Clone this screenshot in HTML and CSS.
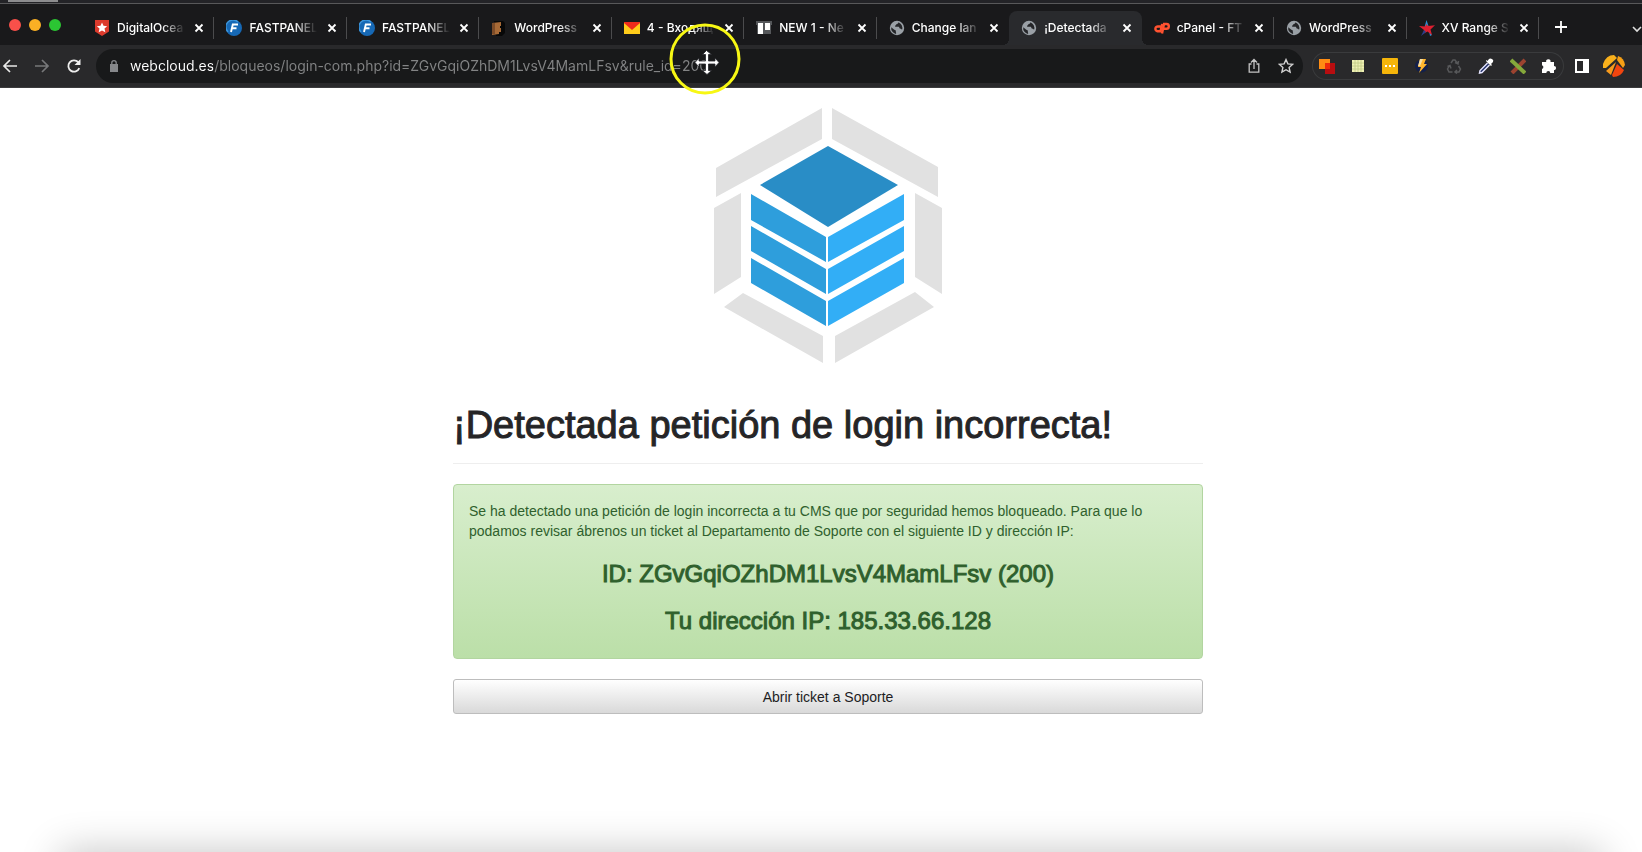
FILE: index.html
```
<!DOCTYPE html>
<html lang="es">
<head>
<meta charset="utf-8">
<title>¡Detectada petición de login incorrecta!</title>
<link rel="stylesheet" href="styles.css">
</head>
<body>
<svg class="defs" aria-hidden="true">
  <symbol id="close" viewBox="0 0 10 10"><path d="M1.500 1.500l7 7M8.500 1.500l-7 7" stroke="currentColor" stroke-width="1.800"/></symbol>
  <symbol id="globe" viewBox="0 0 16 16"><circle cx="8" cy="8" r="7.200" fill="#9aa0a6"/><path d="M2.200 7.200L5 9.500c.4.600 1.300.5 1.800 1 .3.700-.2 1.200.2 1.900.3.400.2.900 0 1.500A6 6 0 0 1 2.200 7.200zM9.200 2.300c.5.700-.3 1.500-1.300 1.700-.9.200-.6 1.100-1.400 1.400-.8.200-.6 1.100.1 1.300h3c.8.200.5 1.500 1.400 1.800.9.200 1.700.5 2 1.500A6 6 0 0 0 9.200 2.300z" fill="#242528"/></symbol>
  <symbol id="fast" viewBox="0 0 16 16"><circle cx="8" cy="8" r="8" fill="#1668b5"/><path d="M2 12A7 7 0 0 1 12 2" fill="none" stroke="#3a94dc" stroke-width="1.500"/><path d="M5 12L6.800 4.500H12M6 8.300h4.500" fill="none" stroke="#fff" stroke-width="1.900"/></symbol>
</svg>

<header class="browser">
  <div class="backdrop"><span></span></div>
  <div class="strip">
    <div class="lights"><i class="red"></i><i class="amber"></i><i class="green"></i></div>
    <nav class="tabs" aria-label="Pestañas">
      <div class="tab"><svg class="fav" viewBox="0 0 16 16"><path d="M1 0h14v11.500L8 16l-7-4.500z" fill="#dc3b2d"/><path d="M8 2.500l1.500 3.300 3.700.4-2.700 2.400.8 3.600L8 10.400l-3.300 1.800.8-3.600-2.700-2.400 3.700-.4z" fill="#fff"/></svg><span class="title">DigitalOcea</span><button class="x" aria-label="Cerrar"><svg><use href="#close"/></svg></button></div>
      <div class="tab"><svg class="fav"><use href="#fast"/></svg><span class="title">FASTPANEL</span><button class="x" aria-label="Cerrar"><svg><use href="#close"/></svg></button></div>
      <div class="tab"><svg class="fav"><use href="#fast"/></svg><span class="title">FASTPANEL</span><button class="x" aria-label="Cerrar"><svg><use href="#close"/></svg></button></div>
      <div class="tab"><svg class="fav" viewBox="0 0 16 16"><path d="M3 1h9l2 2v10l-3 3H5z" fill="#080808"/><path d="M1 3l9-1v4H9v2h1v4H8v2l-7 1z" fill="#a86a36"/><path d="M1 3h3v11H1z" fill="#7d4c28"/></svg><span class="title">WordPress</span><button class="x" aria-label="Cerrar"><svg><use href="#close"/></svg></button></div>
      <div class="tab"><svg class="fav" viewBox="0 0 16 16"><path d="M0 2h16v12H0z" fill="#ffcc1a"/><path d="M0 2h16v1L8 10 0 3z" fill="#ee2a1c"/></svg><span class="title">4 - Входящ</span><button class="x" aria-label="Cerrar"><svg><use href="#close"/></svg></button></div>
      <div class="tab"><svg class="fav" viewBox="0 0 16 16"><path d="M0 1h16v4h-1v9H1V5H0z" fill="#55575a"/><path d="M2 3h5v11H2zM9 3h5v7H9z" fill="#fff"/></svg><span class="title">NEW 1 - Ne</span><button class="x" aria-label="Cerrar"><svg><use href="#close"/></svg></button></div>
      <div class="tab plain"><svg class="fav"><use href="#globe"/></svg><span class="title">Change lan</span><button class="x" aria-label="Cerrar"><svg><use href="#close"/></svg></button></div>
      <div class="tab plain active"><svg class="fav"><use href="#globe"/></svg><span class="title">¡Detectada</span><button class="x" aria-label="Cerrar"><svg><use href="#close"/></svg></button></div>
      <div class="tab"><svg class="fav" viewBox="0 0 16 16"><path d="M6.500 6.500H4a2.300 2.300 0 0 0-.5 4.700h3L8.200 4" fill="none" stroke="#ff5230" stroke-width="2.400"/><path d="M8 13.500L10 4h2.600a2.400 2.400 0 0 1-.4 4.800H10" fill="none" stroke="#ff5230" stroke-width="2.400"/></svg><span class="title">cPanel - FT</span><button class="x" aria-label="Cerrar"><svg><use href="#close"/></svg></button></div>
      <div class="tab"><svg class="fav"><use href="#globe"/></svg><span class="title">WordPress</span><button class="x" aria-label="Cerrar"><svg><use href="#close"/></svg></button></div>
      <div class="tab"><svg class="fav" viewBox="0 0 16 16"><path d="M7.500 0L9.500 6l-4 1zM11 16l-1-5 3 4z" fill="#2b8fd0"/><path d="M0 6l6 .5L7.500 4l1.500 2 7-.8-4.500 4.300L13 15l-4.500-3.500L4 14l1-4z" fill="#dd1f30"/><path d="M2 16l3-6 2 2z" fill="#27408b"/></svg><span class="title">XV Range S</span><button class="x" aria-label="Cerrar"><svg><use href="#close"/></svg></button></div>
    </nav>
    <div class="strip-end">
      <button aria-label="Nueva pestaña"><svg width="12" height="12" viewBox="0 0 12 12"><path d="M6 0v12M0 6h12" stroke="#fff" stroke-width="1.800"/></svg></button>
      <button aria-label="Buscar pestañas"><svg width="10" height="8" viewBox="0 0 10 8"><path d="M1 2l4 4 4-4" fill="none" stroke="#ddd" stroke-width="1.600"/></svg></button>
    </div>
  </div>

  <div class="toolbar">
    <div class="nav">
      <button aria-label="Atrás"><svg viewBox="0 0 16 16"><path d="M15 8H2.500M8 2L2 8l6 6" fill="none" stroke="#e8e8e8" stroke-width="1.700"/></svg></button>
      <button aria-label="Adelante"><svg viewBox="0 0 16 16"><path d="M1 8h12.500M8 2l6 6-6 6" fill="none" stroke="#77787a" stroke-width="1.700"/></svg></button>
      <button aria-label="Recargar"><svg viewBox="0 0 16 16"><path d="M13.300 10.200A5.700 5.700 0 1 1 12.300 4.200" fill="none" stroke="#eee" stroke-width="1.800"/><path d="M14.500 1v6h-6z" fill="#eee"/></svg></button>
    </div>
    <div class="omnibox">
      <svg class="lock" viewBox="0 0 10 14"><path d="M1 5h8v8H1z" fill="#86888b"/><path d="M2.800 6V3.800a2.200 2.200 0 0 1 4.400 0V6" fill="none" stroke="#86888b" stroke-width="1.300"/></svg>
      <input class="url" type="text" aria-label="Dirección" value="webcloud.es/bloqueos/login-com.php?id=ZGvGqiOZhDM1LvsV4MamLFsv&amp;rule_id=200">
      <button aria-label="Compartir"><svg viewBox="0 0 16 16"><path d="M5.500 6H3.200v8.200h9.600V6h-2.300M8 11V2M5 4.500l3-3 3 3" fill="none" stroke="#c4c4c4" stroke-width="1.300"/></svg></button>
      <button aria-label="Favorito"><svg viewBox="0 0 16 16"><path d="M8 1.600l1.900 4.300 4.700.5-3.500 3.100 1 4.600L8 11.700l-4.100 2.400 1-4.600L1.400 6.400l4.700-.5z" fill="none" stroke="#d2d2d2" stroke-width="1.400"/></svg></button>
    </div>
    <div class="extensions">
      <button aria-label="Capas"><svg viewBox="0 0 16 16"><path d="M6 5h10v11H6z" fill="#b80d10"/><path d="M0 1h11v10H0z" fill="#ff8c13"/><path d="M6 5h5v6H6z" fill="#ef2a0a"/></svg></button>
      <button aria-label="Hoja"><svg viewBox="0 0 16 16"><path d="M2 2h12v12H2z" fill="#eff0b5"/><path d="M2 5h12M2 8h12M2 11h12M5 2v12M8 2v12M11 2v12" stroke="#bfc987" stroke-width=".8"/></svg></button>
      <button aria-label="Notas"><svg viewBox="0 0 16 16"><rect width="16" height="16" rx="1" fill="#f5b50a"/><path d="M3 8h2M7 8h2M11 8h2" stroke="#fff" stroke-width="1.800"/></svg></button>
      <button aria-label="Rayo"><svg viewBox="0 0 16 16"><circle cx="7.500" cy="8" r="6.500" fill="#131f4a"/><path d="M6 1h6l-2 5h3L5 15l2-6H4z" fill="#ffb62e"/><path d="M6 1h3L6 8H4z" fill="#f7dfa6"/></svg></button>
      <button aria-label="Reciclar"><svg viewBox="0 0 16 16"><path d="M5 5l2-3h2l2.500 3.500M12.500 8l2 3-1.500 3H9.500M6.500 14H3l-1.500-3 2-3.500M9 4.500l3 1.500.5-3M11 12l-2 2 2 1.500M1.500 8.500l2.500-1 1 3" fill="none" stroke="#57585a" stroke-width="1.500"/></svg></button>
      <button aria-label="Cuentagotas"><svg viewBox="0 0 16 16"><path d="M9.500 5L2 12.500 1.500 15 4 14.500 11.500 7" fill="#26336d" stroke="#e6e6ff" stroke-width="1.400"/><path d="M8 3l5 5 1-1-1-1 2-2q1-2-1-3t-3 0l-1.500 2-1-1z" fill="#fff"/></svg></button>
      <button aria-label="Herramientas"><svg viewBox="0 0 16 16"><path d="M15 2L2 15" stroke="#9c4330" stroke-width="4"/><path d="M1 2l14 13" stroke="#85a83b" stroke-width="4"/></svg></button>
      <button aria-label="Extensiones"><svg viewBox="0 0 16 16"><path d="M1 4h4.200a2.200 2.200 0 1 1 4.300 0H13v4a2.100 2.100 0 1 1 0 4.200V15H9.300a2 2 0 0 0-4 0H1v-4a2 2 0 0 0 0-3.800z" fill="#fff"/></svg></button>
    </div>
    <div class="profile">
      <button aria-label="Panel lateral"><svg viewBox="0 0 16 16"><path d="M2 2h12v12H2z" fill="none" stroke="#fff" stroke-width="2"/><path d="M9 2h5v12H9z" fill="#fff"/></svg></button>
      <button class="avatar" aria-label="Perfil"><svg viewBox="0 0 24 24"><path d="M1 10Q4 1 12 1l3 3L4 14H1z" fill="#f8b01c"/><path d="M16 2q6 2 7 9l-2 3-6-8z" fill="#f7a015"/><path d="M4 17L14 8l-5 13z" fill="#f79a1c"/><path d="M15 10l7 6q-3 7-11 7l-1-2z" fill="#f2450f"/></svg></button>
    </div>
  </div>

  <svg class="pointer" viewBox="0 0 72 72" aria-hidden="true">
    <circle cx="36" cy="36" r="34" fill="none" stroke="#f7f714" stroke-width="3"/>
    <g fill="#fff" stroke="#23242a" stroke-width=".8"><path d="M37.500 27.500l-4 4h3v6.500h-6.500v-3l-4 4.500 4 4.500v-3h6.500v6.500h-3l4.500 4 4.500-4h-3V41H46v3l4-4.500-4-4.500v3h-6.500v-6.500h3z"/></g>
  </svg>
</header>

<main class="page">
  <div class="content">
    <svg class="logo" viewBox="0 0 228 256" role="img" aria-label="webcloud">
      <g fill="#e1e1e1">
        <path d="M108 0v31L2 89V60zM118 0v31l106 58V59zM0 100l27-15v84L0 186zM228 100l-27-15v84l27 17zM29 185l-19 14 99 56v-27zM201 184l19 15-99 56v-27z"/>
      </g>
      <path d="M114 38l70 39-70 42-68-42z" fill="#298dc6"/>
      <path d="M37 86l75 43v25l-75-42zM37 118l75 43v25l-75-43zM37 150l75 43v25l-75-43z" fill="#2e9edc"/>
      <path d="M190 86l-76 43v25l76-42zM190 118l-76 43v25l76-43zM190 150l-76 43v25l76-43z" fill="#32aef6"/>
    </svg>
    <h1>¡Detectada petición de login incorrecta!</h1>
    <section class="alert">
      <p>Se ha detectado una petición de login incorrecta a tu CMS que por seguridad hemos bloqueado. Para que lo podamos revisar ábrenos un ticket al Departamento de Soporte con el siguiente ID y dirección IP:</p>
      <h3>ID: ZGvGqiOZhDM1LvsV4MamLFsv (200)</h3>
      <h3>Tu dirección IP: 185.33.66.128</h3>
    </section>
    <button class="ticket">Abrir ticket a Soporte</button>
  </div>
  <div class="shade"></div>
</main>
</body>
</html>
```
FILE: styles.css
```
* { box-sizing: border-box; }
body {
  margin: 0;
  min-height: 100vh;
  display: flex;
  flex-direction: column;
  background: #fff;
  font-family: "Liberation Sans", Arial, sans-serif;
  font-size: 14px;
  line-height: 20px;
}
.defs { position: absolute; width: 0; height: 0; }
button { border: 0; padding: 0; background: none; color: inherit; font: inherit; }

/* Browser window */
.browser { position: relative; background: #19191b; color: #fff; font-family: Inter, sans-serif; }
.backdrop { height: 4px; padding-left: 8px; background: #232327; border-bottom: 1px solid #58585a; }
.backdrop span { display: block; width: 50px; height: 2px; background: #8c8c8e; }
.strip { display: flex; height: 41px; padding-top: 7px; }
.lights { display: flex; flex: none; gap: 8px; width: 82px; padding: 8px 0 0 9px; }
.lights i { width: 12px; height: 12px; border-radius: 50%; }
.red { background: #f8504a; }
.amber { background: #fbb024; }
.green { background: #2bc533; }
.tabs { display: flex; flex: 1; min-width: 0; }
.tab {
  position: relative;
  display: flex;
  flex: 1 1 0;
  align-items: center;
  min-width: 0;
  padding: 0 9px 0 12px;
  font-size: 12px;
  font-weight: 500;
}
.tab::after {
  content: "";
  position: absolute;
  right: 0;
  top: 6px;
  height: 22px;
  border-right: 1px solid #4b4b4d;
}
.tab.active::after, .plain:has(+ .active)::after { display: none; }
.active { background: #292a2d; border-radius: 8px 8px 0 0; }
.active::before {
  content: "";
  position: absolute;
  left: -6px;
  right: -6px;
  bottom: 0;
  height: 6px;
  background:
    radial-gradient(circle at 0 0, transparent 6px, #292a2d 6px) left / 6px 6px no-repeat,
    radial-gradient(circle at 100% 0, transparent 6px, #292a2d 6px) right / 6px 6px no-repeat;
}
.fav { flex: none; width: 16px; height: 16px; margin-right: 7px; }
.title {
  flex: 1;
  min-width: 0;
  overflow: hidden;
  white-space: nowrap;
  -webkit-mask-image: linear-gradient(90deg, #000 45px, transparent 68px);
  mask-image: linear-gradient(90deg, #000 45px, transparent 68px);
}
.x { display: grid; place-items: center; flex: none; width: 12px; height: 16px; }
.x svg { width: 10px; height: 10px; }
.strip-end { display: flex; flex: none; justify-content: space-between; width: 103px; padding-left: 16px; }

.toolbar { display: flex; align-items: center; height: 43px; background: #29292b; border-bottom: 1px solid #3b3b3d; }
.toolbar button { display: grid; place-items: center; flex: none; width: 32px; height: 28px; }
.toolbar svg { width: 16px; height: 16px; }
.nav { display: flex; flex: none; width: 96px; margin-left: -6px; margin-right: 6px; }
.omnibox {
  display: flex;
  flex: 1;
  align-items: center;
  min-width: 0;
  height: 34px;
  padding: 0 1px 0 13px;
  border-radius: 17px;
  background: #18191a;
}
.toolbar .lock { flex: none; width: 10px; height: 14px; margin-right: 11px; }
.url {
  flex: 1;
  min-width: 0;
  height: 24px;
  padding: 0;
  border: 0;
  outline: 0;
  font: 14px/24px Inter, sans-serif;
  color: transparent;
  background: linear-gradient(90deg, #fff 83px, #838485 83px);
  -webkit-background-clip: text;
  background-clip: text;
}
.extensions {
  display: flex;
  flex: none;
  height: 28px;
  margin-left: 9px;
  border-radius: 14px;
  box-shadow: inset 0 0 0 1px #3a3b3d;
}
.extensions button:first-child, .extensions button:last-child { width: 30px; }
.profile { display: flex; flex: none; padding-right: 12px; margin-left: 2px; }
.toolbar .avatar svg { width: 24px; height: 24px; }
.pointer { position: absolute; left: 669px; top: 23px; width: 72px; height: 72px; z-index: 2; }

/* Page */
.page { position: relative; flex: 1; overflow: hidden; padding: 20px 0 40px 14px; }
.content { display: flex; flex-direction: column; max-width: 750px; margin: 0 auto; }
.logo { align-self: center; width: 228px; height: 256px; }
h1 {
  margin: 41px 0 20px;
  padding-bottom: 18px;
  border-bottom: 1px solid #eee;
  color: #252527;
  font-size: 38px;
  font-weight: 400;
  line-height: 40px;
  -webkit-text-stroke: 1px;
}
.alert {
  padding: 16px 15px 17px;
  border: 1px solid #b2d5a0;
  border-radius: 4px;
  background: linear-gradient(#d8eecd, #bbdfa8);
  color: #2f602d;
}
.alert p { margin: 0; }
h3 {
  margin: 13px 0 7px;
  font-size: 24px;
  font-weight: 400;
  line-height: 40px;
  text-align: center;
  -webkit-text-stroke: 1px;
}
h3 + h3 { margin: 0; }
.ticket {
  height: 35px;
  margin-top: 20px;
  border: 1px solid #bdbdbd;
  border-radius: 3px;
  background: linear-gradient(#fff, #d9d9d9);
  color: #1d1d1f;
}
.shade {
  position: absolute;
  left: 60px;
  right: 40px;
  top: 100%;
  height: 40px;
  box-shadow: 0 0 40px rgba(0, 0, 0, .24);
}
```
